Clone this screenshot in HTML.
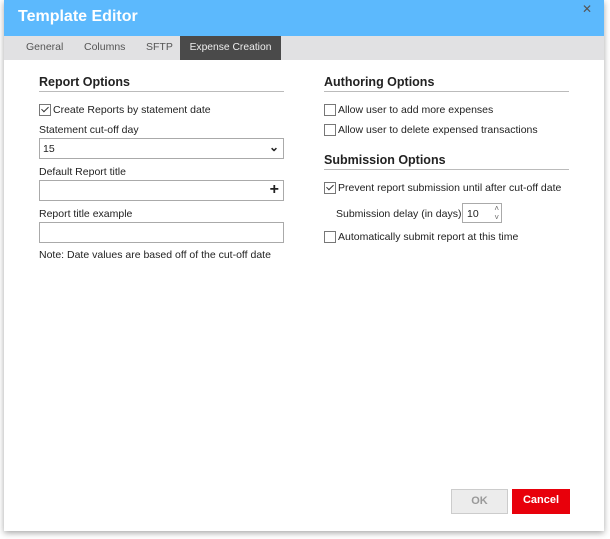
<!DOCTYPE html>
<html><head><style>
body{margin:0;width:610px;height:539px;background:#fff;font-family:"Liberation Sans",sans-serif;font-size:10.5px;color:#222;position:relative;overflow:hidden}
.dlg{position:absolute;left:4px;top:0;width:600px;height:531px;background:#fff;box-shadow:0 2px 6px rgba(0,0,0,.35)}
.hdr{position:absolute;left:0;top:0;width:600px;height:36px;background:#5cb9fd}
.hdr .t{position:absolute;left:14px;top:8px;color:#fff;font-weight:bold;font-size:16px}
.hdr .x{position:absolute;left:578px;top:2px;color:#555;font-size:12px}
.tabs{position:absolute;left:0;top:36px;width:600px;height:24px;background:#e1e1e3}
.tab{position:absolute;top:5px;color:#555;font-size:10.5px;white-space:nowrap}
.tab.a{top:0;height:24px;line-height:23px;background:#4a4a4a;color:#eee;left:176px;width:101px;text-align:center;font-size:10.3px}
.abs{position:absolute;white-space:nowrap}
h3{position:absolute;margin:0;font-size:12.5px;font-weight:bold;color:#222;border-bottom:1px solid #bbb;padding-bottom:2px}
.cb{position:absolute;width:10px;height:10px;border:1px solid #777;background:#fff}
.cb.c:after{content:"";position:absolute;left:3px;top:0px;width:3px;height:6px;border:solid #333;border-width:0 1.5px 1.5px 0;transform:rotate(45deg)}
.inp{position:absolute;border:1px solid #aaa;background:#fff;box-sizing:border-box}
.btn{position:absolute;top:489px;height:25px;box-sizing:border-box;font-weight:bold;font-size:11px;text-align:center;line-height:23px}
</style></head><body>
<div class="dlg">
<div class="hdr"><div class="t">Template Editor</div><div class="x">✕</div></div>
<div class="tabs">
<div class="tab" style="left:22px">General</div>
<div class="tab" style="left:80px">Columns</div>
<div class="tab" style="left:142px">SFTP</div>
<div class="tab a">Expense Creation</div>
</div>
<h3 style="left:35px;top:75px;width:245px">Report Options</h3>
<div class="cb c" style="left:35px;top:104px"></div><div class="abs" style="left:49px;top:104px">Create Reports by statement date</div>
<div class="abs" style="left:35px;top:124px">Statement cut-off day</div>
<div class="inp" style="left:35px;top:138px;width:245px;height:21px"><span class="abs" style="left:3px;top:4px">15</span><span class="abs" style="right:4px;top:1px;font-size:12px;font-weight:bold">⌄</span></div>
<div class="abs" style="left:35px;top:166px">Default Report title</div>
<div class="inp" style="left:35px;top:180px;width:245px;height:21px"><span class="abs" style="right:4px;top:0px;font-size:16px;font-weight:bold">+</span></div>
<div class="abs" style="left:35px;top:208px">Report title example</div>
<div class="inp" style="left:35px;top:222px;width:245px;height:21px"></div>
<div class="abs" style="left:35px;top:249px">Note: Date values are based off of the cut-off date</div>
<h3 style="left:320px;top:75px;width:245px">Authoring Options</h3>
<div class="cb" style="left:320px;top:104px"></div><div class="abs" style="left:334px;top:104px">Allow user to add more expenses</div>
<div class="cb" style="left:320px;top:124px"></div><div class="abs" style="left:334px;top:124px">Allow user to delete expensed transactions</div>
<h3 style="left:320px;top:153px;width:245px">Submission Options</h3>
<div class="cb c" style="left:320px;top:182px"></div><div class="abs" style="left:334px;top:182px">Prevent report submission until after cut-off date</div>
<div class="abs" style="left:332px;top:208px">Submission delay (in days)</div>
<div class="inp" style="left:458px;top:203px;width:40px;height:20px"><span class="abs" style="left:4px;top:4px">10</span><span class="abs" style="right:2px;top:0px;font-size:8px;color:#666;line-height:9px">˄<br>˅</span></div>
<div class="cb" style="left:320px;top:231px"></div><div class="abs" style="left:334px;top:231px">Automatically submit report at this time</div>
<div class="btn" style="left:447px;width:57px;background:#ececec;border:1px solid #ccc;color:#999">OK</div>
<div class="btn" style="left:508px;width:58px;background:#e8000b;color:#fff">Cancel</div>
</div>
</body></html>
